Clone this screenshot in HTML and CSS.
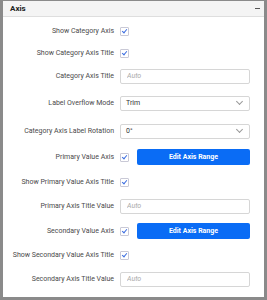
FILE: index.html
```html
<!DOCTYPE html>
<html>
<head>
    <title>Axis</title>
    <link rel="stylesheet" href="styles.css">
</head>
<body>
    <div class="panel">
        <div class="panel-header">
            <span class="panel-title">Axis</span>
            <span class="collapse"></span>
        </div>
        <div class="panel-body">
            <div class="row r-tight">
                <label>Show Category Axis</label>
                <div class="control"><span class="check"></span></div>
            </div>
            <div class="row r-mid">
                <label>Show Category Axis Title</label>
                <div class="control"><span class="check"></span></div>
            </div>
            <div class="row r-wide">
                <label>Category Axis Title</label>
                <div class="control"><input type="text" placeholder="Auto"></div>
            </div>
            <div class="row r-wider">
                <label>Label Overflow Mode</label>
                <div class="control"><div class="select">Trim<span class="chevron"></span></div></div>
            </div>
            <div class="row r-big">
                <label>Category Axis Label Rotation</label>
                <div class="control"><div class="select">0°<span class="chevron"></span></div></div>
            </div>
            <div class="row r-norm1">
                <label>Primary Value Axis</label>
                <div class="control"><span class="check"></span><button>Edit Axis Range</button></div>
            </div>
            <div class="row">
                <label>Show Primary Value Axis Title</label>
                <div class="control"><span class="check"></span></div>
            </div>
            <div class="row r-norm1">
                <label>Primary Axis Title Value</label>
                <div class="control"><input type="text" placeholder="Auto"></div>
            </div>
            <div class="row">
                <label>Secondary Value Axis</label>
                <div class="control"><span class="check"></span><button>Edit Axis Range</button></div>
            </div>
            <div class="row">
                <label>Show Secondary Value Axis Title</label>
                <div class="control"><span class="check"></span></div>
            </div>
            <div class="row">
                <label>Secondary Axis Title Value</label>
                <div class="control"><input type="text" placeholder="Auto"></div>
            </div>
        </div>
    </div>
</body>
</html>
```
FILE: styles.css
```css
body {
    margin: 0;
    font-family: Roboto, "Liberation Sans", Arial, sans-serif;
    background-color: #fff;
}
.panel {
    width: 261px;
    height: 296px;
    border: 3px solid #8a8a8a;
    border-top-width: 1px;
    background: white;
}
.panel-header {
    height: 15px;
    background-color: #f4f4f4;
    border-bottom: 1px solid #dedede;
    display: flex;
    align-items: center;
    justify-content: space-between;
    padding: 0 4px 0 7px;
}
.panel-title {
    font-size: 8px;
    font-weight: bold;
    color: #222;
}
.collapse {
    width: 5px;
    height: 1px;
    background: #555;
    margin-top: -1px;
}
.panel-body {
    padding-top: 6px;
}
.row {
    display: flex;
    align-items: center;
    height: 16px;
    margin-bottom: 8px;
}
.r-tight {
    margin-bottom: 6px;
}
.r-mid {
    margin-bottom: 7px;
}
.r-wide {
    margin-bottom: 11px;
}
.r-wider {
    margin-bottom: 12px;
}
.r-big {
    margin-bottom: 10px;
}
.r-norm1 {
    margin-bottom: 9px;
}
.row label {
    width: 111px;
    text-align: right;
    font-size: 7px;
    color: #4a4a4a;
    white-space: nowrap;
}
.control {
    display: flex;
    align-items: center;
    margin-left: 6px;
    width: 130px;
}
.check {
    width: 7px;
    height: 7px;
    border: 1px solid #c9c9d6;
    border-radius: 1px;
    position: relative;
    flex-shrink: 0;
}
.check::after {
    content: "";
    position: absolute;
    left: 2px;
    top: 0px;
    width: 2px;
    height: 4px;
    border: solid #3d6ee0;
    border-width: 0 1px 1px 0;
    transform: rotate(40deg);
}
input, .select {
    box-sizing: border-box;
    width: 130px;
    height: 15px;
    border: 1px solid #d6d6d6;
    border-radius: 2px;
    font-family: inherit;
    font-size: 7px;
    padding: 0 6px;
    color: #333;
    margin: 0;
}
input::placeholder {
    color: #a8a8a8;
    font-style: italic;
}
.select {
    display: flex;
    align-items: center;
    justify-content: space-between;
    padding-left: 5px;
}
.chevron {
    width: 4px;
    height: 4px;
    border: solid #999;
    border-width: 0 1px 1px 0;
    transform: rotate(45deg);
    margin-top: -3px;
    margin-right: 1px;
}
button {
    margin-left: 8px;
    width: 114px;
    height: 16px;
    background-color: #0a6cf5;
    color: white;
    border: none;
    border-radius: 2px;
    font-family: inherit;
    font-size: 7px;
    font-weight: bold;
    padding: 0;
}
```
